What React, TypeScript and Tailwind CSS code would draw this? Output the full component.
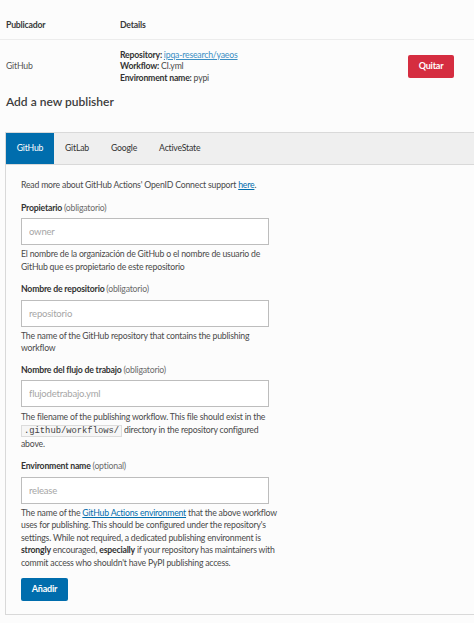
export default function App() {
  const input =
    "mt-[4px] block h-[27px] w-[248px] border border-[#bdbdbd] bg-white px-[7px] text-[9.5px] text-[#464646] placeholder:text-[#a6a6a6] outline-none";
  const label = "font-bold text-[#333]";
  const hint = "font-normal text-[#6b6b6b]";

  return (
    <div
      className="min-h-[623px] w-full overflow-hidden bg-[#fcfcfc] text-[8.7px] leading-[12.5px] tracking-[-0.2px] text-[#4a4a4a]"
      style={{ fontFamily: "Lato, 'Open Sans', sans-serif" }}
    >
      {/* Existing publishers table */}
      <div className="flex h-[40px] items-end border-b border-[#ececec] pb-[8px] pl-[6px] font-bold text-[#3a3a3a]">
        <div className="w-[114px]">Publicador</div>
        <div>Details</div>
      </div>
      <div className="flex h-[52px] items-center pl-[6px] pr-[20px]">
        <div className="w-[114px] text-[#555]">GitHub</div>
        <div className="flex-1 leading-[11.5px]">
          <div>
            <span className="font-bold text-[#333]">Repository: </span>
            <a className="text-[#3b8fc4] underline">ipqa-research/yaeos</a>
          </div>
          <div>
            <span className="font-bold text-[#333]">Workflow: </span>CI.yml
          </div>
          <div>
            <span className="font-bold text-[#333]">Environment name: </span>pypi
          </div>
        </div>
        <button className="h-[23px] w-[46px] rounded-[2px] bg-[#d52d40] text-[9px] font-bold text-white">
          Quitar
        </button>
      </div>

      <h2 className="pl-[6px] pt-[2px] text-[12px] font-semibold leading-[16px] tracking-normal text-[#3d3d3d]">
        Add a new publisher
      </h2>

      {/* Publisher form panel */}
      <div className="ml-[5px] mt-[22px] border-b border-l border-[#d9d9d9]">
        <div className="flex h-[33px] border-y border-[#d9d9d9] bg-[#efefef]">
          <div className="flex w-[48px] items-center justify-center bg-[#006dad] text-white">GitHub</div>
          <div className="flex items-center px-[11px] text-[#333]">GitLab</div>
          <div className="flex items-center px-[11px] text-[#333]">Google</div>
          <div className="flex items-center px-[11px] text-[#333]">ActiveState</div>
        </div>

        <div className="w-[277px] pb-[13px] pl-[15px] pt-[14px]">
          <p>
            Read more about GitHub Actions' OpenID Connect support{" "}
            <a className="text-[#006dad] underline">here</a>.
          </p>

          <div className="mt-[10px]">
            <div className={label}>
              Propietario <span className={hint}>(obligatorio)</span>
            </div>
            <input className={input} placeholder="owner" />
            <p className="mt-[3px] pr-[6px]">
              El nombre de la organización de GitHub o el nombre de usuario de GitHub que es propietario de este repositorio
            </p>
          </div>

          <div className="mt-[10px]">
            <div className={label}>
              Nombre de repositorio <span className={hint}>(obligatorio)</span>
            </div>
            <input className={input} placeholder="repositorio" />
            <p className="mt-[3px]">The name of the GitHub repository that contains the publishing workflow</p>
          </div>

          <div className="mt-[9px]">
            <div className={label}>
              Nombre del flujo de trabajo <span className={hint}>(obligatorio)</span>
            </div>
            <input className={input} placeholder="flujodetrabajo.yml" />
            <p className="mt-[3px] leading-[13px]">
              The filename of the publishing workflow. This file should exist in the{" "}
              <code className="border border-[#dcdcdc] bg-[#f6f6f6] px-[2px] font-['Liberation_Mono',monospace] text-[8.8px] leading-[11px] tracking-normal text-[#444]">
                .github/workflows/
              </code>{" "}
              directory in the repository configured above.
            </p>
          </div>

          <div className="mt-[10px]">
            <div className={label}>
              Environment name <span className={hint}>(optional)</span>
            </div>
            <input className={input} placeholder="release" />
            <p className="mt-[3px]">
              The name of the <a className="text-[#006dad] underline">GitHub Actions environment</a> that the above
              workflow uses for publishing. This should be configured under the repository's settings. While not
              required, a dedicated publishing environment is <strong className="text-[#333]">strongly</strong>{" "}
              encouraged, <strong className="text-[#333]">especially</strong> if your repository has maintainers with
              commit access who shouldn't have PyPI publishing access.
            </p>
          </div>

          <button className="mt-[9px] h-[23px] w-[47px] rounded-[2px] bg-[#006dad] text-[9px] font-bold text-white">
            Añadir
          </button>
        </div>
      </div>
    </div>
  );
}
